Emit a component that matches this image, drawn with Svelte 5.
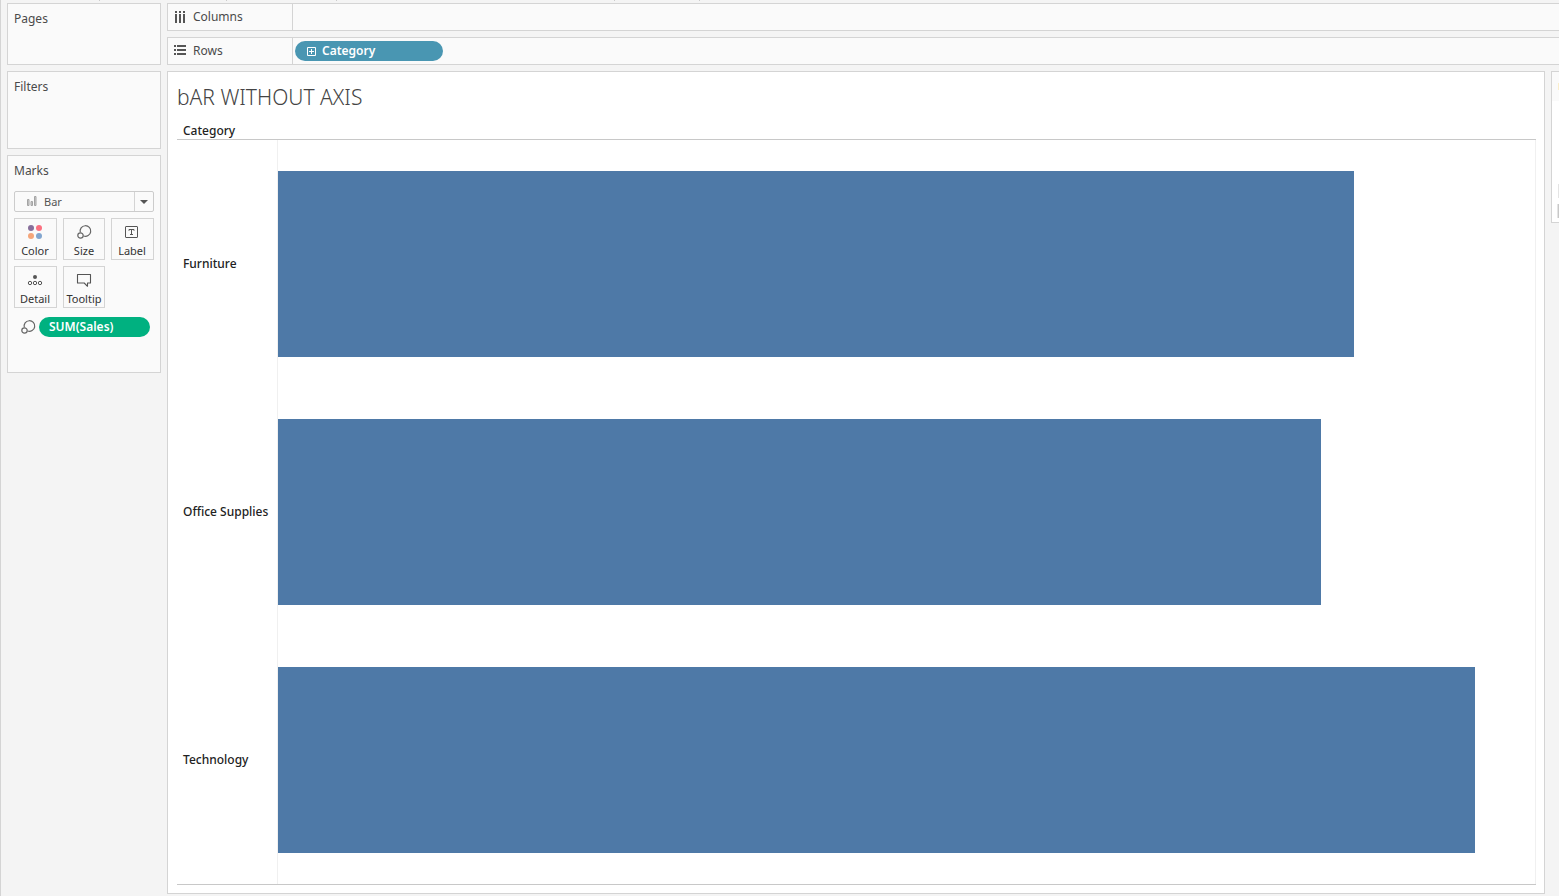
<script>
  const rows = [
    { name: 'Furniture', share: 85.6 },
    { name: 'Office Supplies', share: 83 },
    { name: 'Technology', share: 95.23 },
  ];
  let mark = $state('Bar');
</script>

{#snippet sizeIcon()}
  <svg width="16" height="16" viewBox="0 0 16 16" fill="none" stroke="#666" stroke-width="1.2">
    <path d="M4.300 8.400A5.300 5.300 0 1 1 7.600 12" />
    <circle cx="4.500" cy="11.500" r="2.700" />
  </svg>
{/snippet}

<div class="workspace">
  <div class="ticks" aria-hidden="true"><i></i><i></i><i></i><i></i><i></i></div>
  <aside class="side">
    <section class="card pages"><h2>Pages</h2></section>
    <section class="card filters"><h2>Filters</h2></section>
    <section class="card marks">
      <h2>Marks</h2>
      <div class="picker">
        <svg class="bars" width="11" height="11" viewBox="0 0 11 11" fill="#d0d0d0" stroke="#a4a4a4" aria-hidden="true">
          <path d="M.5 3.500h1.500v6H.5zM4 5.500h1.500v4H4zM7.500.5H9v9H7.500z" />
        </svg>
        <select aria-label="Mark type" bind:value={mark}>
          <option>Bar</option>
          <option>Line</option>
        </select>
        <span class="arrow" aria-hidden="true"></span>
      </div>
      <div class="buttons">
        <button>
          <svg width="16" height="16" viewBox="0 0 16 16">
            <circle cx="4" cy="4" r="3" fill="#876f9b" /><circle cx="12" cy="4" r="3" fill="#fb7080" />
            <circle cx="4" cy="12" r="3" fill="#f5a67a" /><circle cx="12" cy="12" r="3" fill="#82a6cf" />
          </svg>
          Color
        </button>
        <button>{@render sizeIcon()}Size</button>
        <button>
          <svg width="16" height="16" viewBox="0 0 16 16" fill="none" stroke="#555">
            <rect x="1.5" y="2.5" width="12" height="11" rx=".5" />
            <path d="M5 6.8V5.5h5v1.3M7.5 5.5v5M6 10.5h3" />
          </svg>
          Label
        </button>
        <button>
          <svg width="16" height="16" viewBox="0 0 16 16" fill="none" stroke="#555">
            <circle cx="8" cy="5" r="2" fill="#555" stroke="none" />
            <circle cx="3" cy="11" r="1.700" /><circle cx="8" cy="11" r="1.700" /><circle cx="13" cy="11" r="1.700" />
          </svg>
          Detail
        </button>
        <button>
          <svg width="16" height="16" viewBox="0 0 16 16" fill="none" stroke="#555" stroke-width="1.1">
            <path d="M1.500 2.500h13v8.500h-3v3.300l-3.300-3.300H1.500z" stroke-linejoin="round" />
          </svg>
          Tooltip
        </button>
      </div>
      <div class="encoding">
        {@render sizeIcon()}
        <button class="pill green">SUM(Sales)</button>
      </div>
    </section>
  </aside>

  <main>
    <section class="shelf">
      <h2>
        <svg width="12" height="12" viewBox="0 0 12 12" fill="#555">
          <path d="M1 0h2v2H1zM5 0h2v2H5zM9 0h2v2H9zM1 3h2v9H1zM5 3h2v9H5zM9 3h2v9H9z" />
        </svg>
        Columns
      </h2>
    </section>
    <section class="shelf">
      <h2>
        <svg width="12" height="12" viewBox="0 0 12 12" fill="#555">
          <path d="M0 0h2v2H0zM0 4h2v2H0zM0 8h2v2H0zM3 0h9v2H3zM3 4h9v2H3zM3 8h9v2H3z" />
        </svg>
        Rows
      </h2>
      <button class="pill blue">
        <svg width="9" height="9" viewBox="0 0 9 9" fill="none" stroke="#fff">
          <path d="M.5.5h8v8h-8zM4.500 2v5M2 4.500h5" />
        </svg>
        Category
      </button>
    </section>

    <div class="stage">
      <section class="sheet">
        <h1>bAR WITHOUT AXIS</h1>
        <table>
          <thead>
            <tr><th scope="col">Category</th><td></td></tr>
          </thead>
          <tbody>
            {#each rows as row}
              <tr>
                <th scope="row">{row.name}</th>
                <td class="plot"><div class="bar" style:width="{row.share}%"></div></td>
              </tr>
            {/each}
          </tbody>
        </table>
      </section>
      <aside class="legend" aria-hidden="true">
        <div class="legend-head"><i></i></div>
        <div class="swatches"><i></i><i></i></div>
      </aside>
    </div>
  </main>
</div>

<style>
  :global(body) {
    margin: 0;
    background: #f4f4f4;
  }
  .workspace {
    box-sizing: border-box;
    position: relative;
    display: flex;
    gap: 6px;
    min-height: 100vh;
    padding: 3px 0 2px 6px;
    border-left: 1px solid #d4d4d4;
    overflow: hidden;
    font: 12px/16px "Noto Sans", sans-serif;
    color: #4a4a4a;
  }
  .ticks {
    position: absolute;
    top: 0;
    left: 98px;
    display: grid;
    grid-template-columns: 127px 110px 278px 85px 1px;
  }
  .ticks i {
    width: 1px;
    height: 1px;
    background: #ccc;
  }
  h1,
  h2 {
    margin: 0;
    font-weight: 400;
  }
  h2 {
    font-size: 12px;
    line-height: 16px;
  }
  button {
    font: inherit;
    color: inherit;
  }
  svg {
    flex: none;
    display: block;
  }
  .side {
    flex: none;
    display: flex;
    flex-direction: column;
    gap: 6px;
    width: 154px;
  }
  .card {
    box-sizing: border-box;
    padding: 7px 6px;
    background: #fafafa;
    border: 1px solid #d4d4d4;
  }
  .pages {
    min-height: 62px;
  }
  .filters {
    min-height: 78px;
  }
  .marks {
    min-height: 218px;
  }
  .picker {
    display: grid;
    grid-template-columns: 1fr 19px;
    align-items: center;
    box-sizing: border-box;
    height: 21px;
    margin-top: 12px;
    border: 1px solid #ccc;
    border-radius: 2px;
  }
  .picker > * {
    grid-row: 1;
  }
  .bars {
    grid-column: 1;
    margin-left: 12px;
  }
  select {
    grid-column: 1 / 3;
    width: 100%;
    height: 19px;
    padding: 0 0 0 29px;
    border: 0;
    appearance: none;
    background: none;
    font: 11px/16px "Noto Sans", sans-serif;
    color: #555;
  }
  .arrow {
    grid-column: 2;
    display: grid;
    place-items: center;
    height: 19px;
    border-left: 1px solid #d4d4d4;
    pointer-events: none;
  }
  .arrow::after {
    content: "";
    border: 4px solid transparent;
    border-top-color: #555;
    border-bottom: 0;
  }
  .buttons {
    display: grid;
    grid-template-columns: 43px 42px 43px;
    gap: 6px;
    margin-top: 6px;
  }
  .buttons button {
    display: flex;
    flex-direction: column;
    align-items: center;
    gap: 3px;
    box-sizing: border-box;
    height: 42px;
    padding: 5px 0 0;
    border: 1px solid #d4d4d4;
    background: #fafafa;
    font-size: 11px;
    line-height: 16px;
    color: #333;
  }
  .buttons button:nth-child(3n + 1),
  .buttons button:nth-child(3n) {
    padding-right: 1px;
  }
  .encoding {
    display: flex;
    align-items: center;
    gap: 3px;
    margin: 9px 4px 0 6px;
  }
  .pill {
    display: flex;
    align-items: center;
    gap: 6px;
    height: 20px;
    border: 0;
    border-radius: 10px;
    color: #fff;
    font-weight: 600;
  }
  .green {
    flex: 1;
    padding: 0 10px;
    background: #00b180;
  }
  .blue {
    width: 148px;
    margin-left: 2px;
    padding: 0 12px;
    background: #4996b2;
  }
  main {
    flex: 1;
    display: flex;
    flex-direction: column;
    gap: 6px;
    min-width: 0;
  }
  .shelf {
    display: flex;
    align-items: center;
    box-sizing: border-box;
    height: 28px;
    border: 1px solid #d4d4d4;
    border-right: 0;
    background: #fafafa;
  }
  .shelf h2 {
    display: flex;
    align-items: center;
    gap: 7px;
    box-sizing: border-box;
    width: 125px;
    height: 26px;
    padding-left: 6px;
    border-right: 1px solid #d4d4d4;
  }
  .stage {
    flex: 1;
    display: flex;
    align-items: flex-start;
    gap: 6px;
  }
  .sheet {
    flex: 1;
    align-self: stretch;
    display: flex;
    flex-direction: column;
    box-sizing: border-box;
    padding: 12px 8px 8px 9px;
    background: #fff;
    border: 1px solid #d4d4d4;
  }
  h1 {
    font: 300 21px/26px "Noto Sans", "Open Sans", sans-serif;
    color: #444;
  }
  table {
    flex: 1;
    display: flex;
    flex-direction: column;
    margin-top: 13px;
  }
  tr {
    display: grid;
    grid-template-columns: 100px 1fr;
  }
  thead {
    border-bottom: 1px solid #c8c8c8;
  }
  tbody {
    flex: 1;
    display: grid;
    grid-auto-rows: 1fr;
    border-bottom: 1px solid #c8c8c8;
  }
  th,
  td {
    padding: 0;
  }
  th {
    align-self: center;
    padding-left: 6px;
    text-align: left;
    font-weight: 500;
    white-space: nowrap;
    color: #222;
  }
  .plot {
    display: flex;
    align-items: center;
    border: solid #f0f0f0;
    border-width: 0 1px;
  }
  .bar {
    height: 75%;
    background: #4e79a7;
  }
  .legend {
    box-sizing: border-box;
    width: 8px;
    height: 152px;
    border: 1px solid #d4d4d4;
    border-right: 0;
    background: #fff;
  }
  .legend-head {
    display: flex;
    justify-content: flex-end;
    align-items: center;
    height: 29px;
    background: #fafafa;
  }
  .legend-head i {
    width: 1px;
    height: 7px;
    background: #fbeecb;
  }
  .swatches {
    display: flex;
    flex-direction: column;
    align-items: flex-end;
    gap: 6px;
    padding-top: 83px;
  }
  .swatches i {
    width: 1px;
    height: 14px;
    background: #e4e4e4;
  }
  .swatches i + i {
    border-left: 1px solid #e4e4e4;
    background: #c8c8c8;
  }
</style>
